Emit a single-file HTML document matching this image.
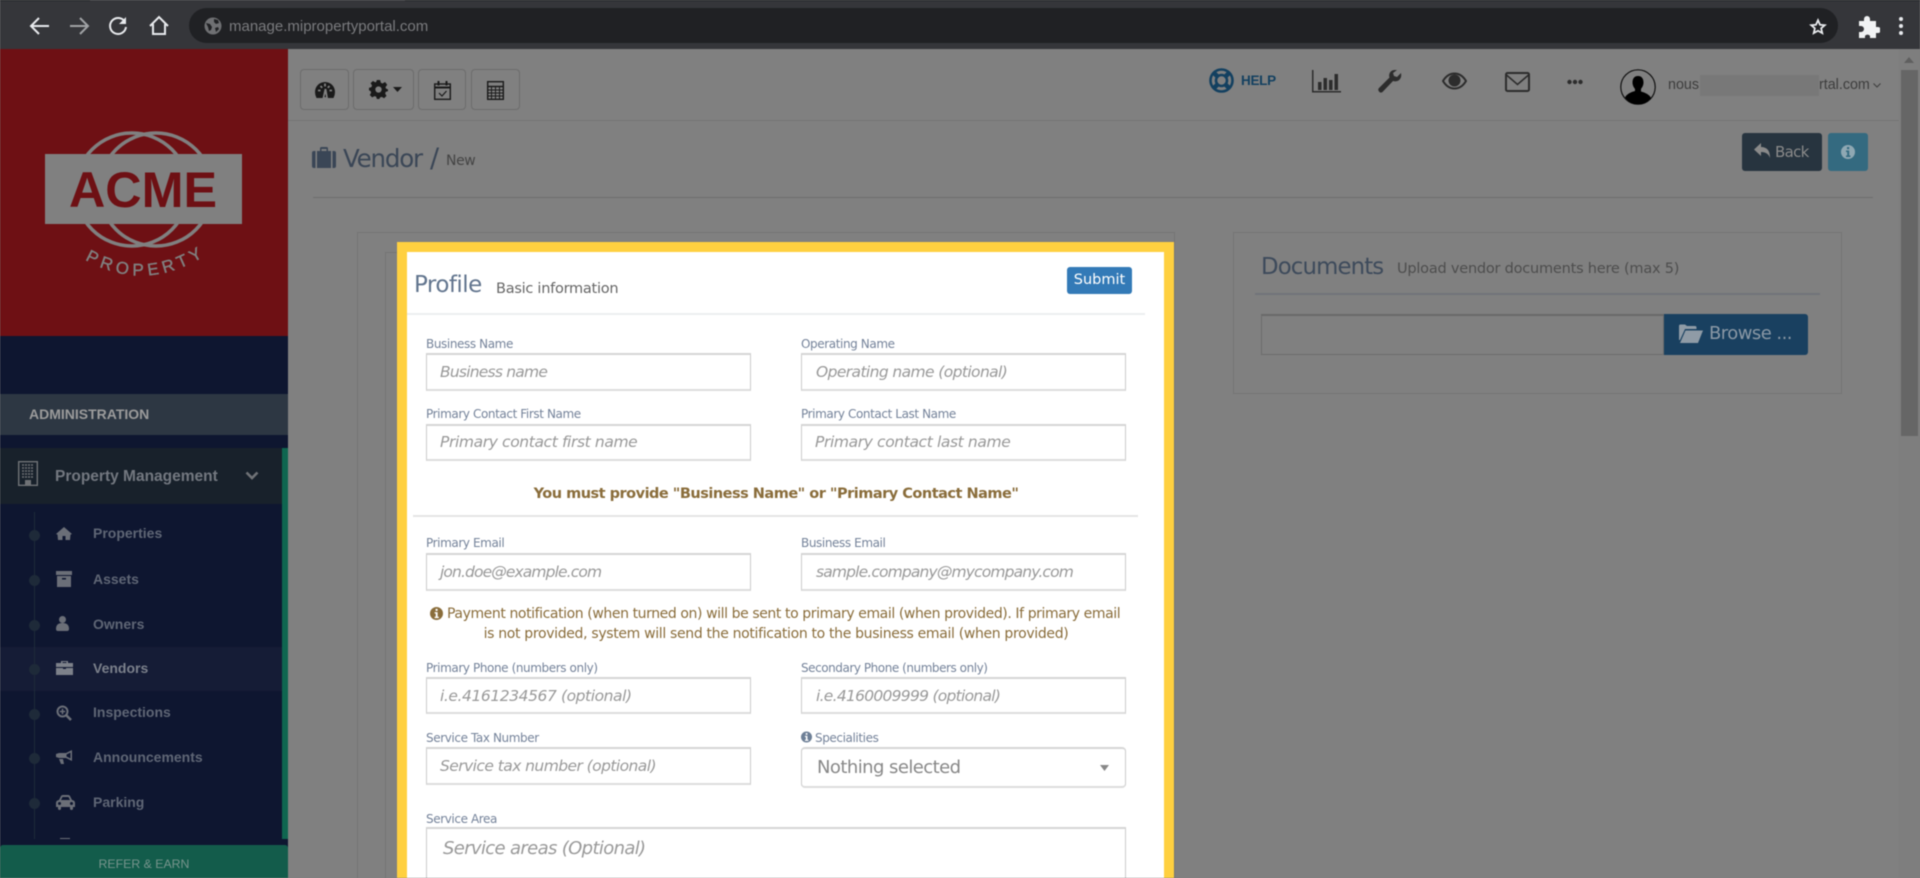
<!DOCTYPE html>
<html lang="en"><head><meta charset="utf-8"><title>Vendor</title>
<style>
*{box-sizing:border-box}
html,body{margin:0;padding:0;width:1920px;height:878px;overflow:hidden;background:#808080;font-family:"DejaVu Sans","Liberation Sans",sans-serif}
#root{position:relative;width:1920px;height:878px;overflow:hidden;filter:blur(.45px)}
.a,.t,svg.i{position:absolute}
.t{white-space:nowrap}
.ls{font-family:"Liberation Sans",sans-serif}
.nav{font-family:"Liberation Sans",sans-serif;font-weight:bold;font-size:14px;line-height:20px;left:93px;color:#5f6675}
.lb{font-size:12px;line-height:16px;color:#75839a;letter-spacing:-.4px}
.in{position:absolute;background:#fff;border:1px solid #ccc;border-top:2px solid #d6d6d6;border-bottom:2px solid #dcdcdc}
.ph{position:absolute;font-size:15.5px;line-height:20px;font-style:italic;color:#999;white-space:nowrap;letter-spacing:-.4px}
.btn{position:absolute;top:69px;height:41px;border:1px solid #6c6c6c;border-radius:4px}
.dot{position:absolute;left:29px;width:11px;height:11px;border-radius:50%;background:#1e2a39}
</style></head><body><div id="root">

<!-- browser chrome -->
<div class="a" style="left:0;top:0;width:1920px;height:49px;background:#35363a"></div>
<div class="a" style="left:0;top:0;width:90px;height:1px;background:#202124"></div>
<div class="a" style="left:405px;top:0;width:1515px;height:1px;background:#202124"></div>
<div class="a" style="left:189px;top:8px;width:1649px;height:35px;border-radius:18px;background:#202124"></div>
<svg class="i" style="left:28px;top:14px" width="24" height="24" viewBox="0 0 24 24" fill="none" stroke="#e8eaed" stroke-width="2"><path d="M21 12H4M11 4l-8 8 8 8"/></svg>
<svg class="i" style="left:67px;top:14px" width="24" height="24" viewBox="0 0 24 24" fill="none" stroke="#a0a2a5" stroke-width="2"><path d="M3 12h17M13 4l8 8-8 8"/></svg>
<svg class="i" style="left:106px;top:14px" width="24" height="24" viewBox="0 0 24 24" fill="none" stroke="#e8eaed" stroke-width="2"><path d="M19 8a8 8 0 1 0 1 5"/><path d="M20 3v7h-7" fill="#e8eaed" stroke="none"/></svg>
<svg class="i" style="left:147px;top:14px" width="24" height="24" viewBox="0 0 24 24" fill="none" stroke="#e8eaed" stroke-width="2"><path d="M3 12l9-9 9 9M6 10v10h12V10"/></svg>
<svg class="i" style="left:204px;top:17px" width="18" height="18" viewBox="0 0 18 18"><circle cx="9" cy="9" r="8.5" fill="#6f7073"/><path d="M2 6l4 1 2 3-1 3-2 1-1-4zM10 2l4 1 1 3-3 1-2-2zM11 11l3-1 1 2-3 3z" fill="#202124"/></svg>
<div class="t ls" style="left:229px;top:18px;font-size:15px;line-height:18px;color:#7a7b7e">manage.mipropertyportal.com</div>
<svg class="i" style="left:1809px;top:18px" width="18" height="18" viewBox="0 0 24 24" fill="none" stroke="#e8eaed" stroke-width="2.4"><path d="M12 3l2.7 6 6.3.6-4.8 4.2 1.5 6.4L12 17l-5.700 3.200 1.500-6.400L3 9.600 9.300 9z"/></svg>
<svg class="i" style="left:1858px;top:15px" width="22" height="23" viewBox="0 0 22 23"><path d="M1 6h5V4a3 3 0 0 1 6 0v2h6v6h2a3 3 0 0 1 0 6h-2v5H12v-2a3 3 0 0 0-5 0v2H1v-6h2a3 3 0 0 0 0-6H1z" fill="#f1f3f4"/></svg>
<div class="a" style="left:1899px;top:17px;width:4px;height:4px;border-radius:50%;background:#e8eaed"></div>
<div class="a" style="left:1899px;top:24px;width:4px;height:4px;border-radius:50%;background:#e8eaed"></div>
<div class="a" style="left:1899px;top:31px;width:4px;height:4px;border-radius:50%;background:#e8eaed"></div>

<!-- sidebar -->
<div class="a" style="left:0;top:49px;width:288px;height:287px;background:#6e1014"></div>
<svg class="i" style="left:0;top:49px" width="288" height="287" viewBox="0 49 288 287">
<circle cx="132" cy="189.500" r="56.500" fill="none" stroke="#808080" stroke-width="3.500"/>
<circle cx="156" cy="189.500" r="56.500" fill="none" stroke="#808080" stroke-width="3.500"/>
<rect x="45" y="154" width="197" height="70" fill="#808080"/>
<text x="69" y="207" font-family="Liberation Sans" font-weight="bold" font-size="50" fill="#6e1014" textLength="148" lengthAdjust="spacingAndGlyphs">ACME</text>
<path id="arc" d="M84 259 Q144 294 206 255" fill="none"/>
<text font-family="Liberation Sans" font-size="17" fill="#808080" stroke="#808080" stroke-width=".4" letter-spacing="4.500"><textPath href="#arc" startOffset="1">PROPERTY</textPath></text>
</svg>
<div class="a" style="left:0;top:336px;width:288px;height:542px;background:#0e1630"></div>
<div class="a" style="left:0;top:394px;width:288px;height:41px;background:#2d3743"></div>
<div class="t ls" style="left:29px;top:405px;font-size:14px;font-weight:bold;line-height:18px;color:#9b9b9b">ADMINISTRATION</div>
<div class="a" style="left:0;top:448px;width:282px;height:56px;background:#18212b"></div>
<div class="a" style="left:282px;top:448px;width:6px;height:391px;background:#0f6650"></div>
<svg class="i" style="left:18px;top:461px" width="20" height="25" viewBox="0 0 20 25"><rect x=".7" y=".7" width="18.600" height="23.600" fill="none" stroke="#6f7276" stroke-width="1.400"/><path d="M4 4h12M4 7h12M4 10h12M4 13h12M4 16h12" stroke="#6f7276" stroke-width="1.500" stroke-dasharray="2 1"/><rect x="7" y="19" width="6" height="5" fill="#6f7276"/></svg>
<div class="t ls" style="left:55px;top:466px;font-size:15.500px;font-weight:bold;line-height:22px;color:#737880">Property Management</div>
<svg class="i" style="left:245px;top:471px" width="14" height="10" viewBox="0 0 14 10" fill="none" stroke="#6f7276" stroke-width="2.600"><path d="M1.500 1.500L7 7l5.500-5.500"/></svg>

<div class="a" style="left:0;top:647px;width:282px;height:44px;background:#151c36"></div>
<div class="a" style="left:34px;top:512px;width:1px;height:327px;background:#1e2a39"></div>
<div class="dot" style="top:530px"></div><div class="dot" style="top:575px"></div><div class="dot" style="top:620px"></div><div class="dot" style="top:664px"></div><div class="dot" style="top:709px"></div><div class="dot" style="top:753px"></div><div class="dot" style="top:798px"></div>
<div class="t nav" style="top:523px">Properties</div>
<div class="t nav" style="top:569px">Assets</div>
<div class="t nav" style="top:614px">Owners</div>
<div class="t nav" style="top:658px;color:#7b808b">Vendors</div>
<div class="t nav" style="top:702px">Inspections</div>
<div class="t nav" style="top:747px">Announcements</div>
<div class="t nav" style="top:792px">Parking</div>
<svg class="i" style="left:56px;top:526px" width="16" height="14" viewBox="0 0 16 14"><path d="M8 1l8 7-1.500.6-.5 5.400H9.500v-4h-3v4H2l-.5-5.400L0 8z" fill="#6b6f78"/></svg>
<svg class="i" style="left:56px;top:571px" width="16" height="16" viewBox="0 0 16 16"><path d="M0 0h16v4H0zM1 5h14v11H1z" fill="#6b6f78"/><rect x="6" y="7" width="4" height="1.500" fill="#0e1630"/></svg>
<svg class="i" style="left:56px;top:616px" width="13" height="15" viewBox="0 0 13 15"><circle cx="6.500" cy="3.500" r="3.500" fill="#6b6f78"/><path d="M0 13c0-4 2-6 6.500-6S13 9 13 13q0 2-2 2H2q-2 0-2-2z" fill="#6b6f78"/></svg>
<svg class="i" style="left:56px;top:660px" width="17" height="15" viewBox="0 0 17 15"><path d="M5 3V1h7v2h5v4H0V3zM6.500 2v1h4V2zM0 8h7v1h3V8h7v7H0z" fill="#7d818a"/></svg>
<svg class="i" style="left:56px;top:705px" width="16" height="16" viewBox="0 0 16 16" fill="none" stroke="#6b6f78"><circle cx="6.500" cy="6.500" r="5" stroke-width="2"/><path d="M10 10l5 5" stroke-width="2.600"/><path d="M3.800 6.500h5.400M6.500 3.800v5.400" stroke-width="1.500"/></svg>
<svg class="i" style="left:56px;top:750px" width="17" height="15" viewBox="0 0 17 15"><path d="M16 0v11l-6-3H3L0 7V4l3-1h7zM14.500 2.500L10.500 4.500v2l4 2zM3 9h4l1 5H5z" fill="#6b6f78"/></svg>
<svg class="i" style="left:56px;top:795px" width="19" height="15" viewBox="0 0 19 15"><path d="M3 5l2-4q.5-1 2-1h5q1.500 0 2 1l2 4q3 .5 3 3v4h-2v1.500q0 1.500-1.500 1.500T14 13.500V12H5v1.500Q5 15 3.500 15T2 13.500V12H0V8q0-2.500 3-3zM5 5h9l-1.500-3h-6zM3.500 7a1.500 1.500 0 1 0 0 3 1.500 1.500 0 0 0 0-3zM15.500 7a1.500 1.500 0 1 0 0 3 1.500 1.500 0 0 0 0-3z" fill="#6b6f78" fill-rule="evenodd"/></svg>
<div class="a" style="left:60px;top:838px;width:10px;height:1px;background:#6b6f78"></div>
<div class="a" style="left:0;top:845px;width:288px;height:33px;background:#135c4b;border-radius:3px 3px 0 0"></div>
<div class="t ls" style="left:0;width:288px;text-align:center;top:855px;font-size:12.300px;line-height:18px;color:#76948c">REFER &amp; EARN</div>

<!-- scrollbar -->
<div class="a" style="left:1899px;top:49px;width:21px;height:829px;background:#7e7e7e"></div>
<div class="a" style="left:1901px;top:70px;width:17px;height:366px;background:#666"></div>
<svg class="i" style="left:1904px;top:56px" width="10" height="8" viewBox="0 0 10 8"><path d="M0 7l5-6 5 6z" fill="#5f5f5f"/></svg>

<!-- top toolbar -->
<div class="a" style="left:288px;top:120px;width:1611px;height:1px;background:#747474"></div>
<div class="btn" style="left:300px;width:49px"></div>
<div class="btn" style="left:353px;width:61px"></div>
<div class="btn" style="left:418px;width:48px"></div>
<div class="btn" style="left:471px;width:49px"></div>
<svg class="i" style="left:315px;top:82px" width="20" height="16" viewBox="0 0 20 16"><path d="M10 0a10 10 0 0 1 10 10q0 3-1.500 6h-17Q0 13 0 10A10 10 0 0 1 10 0z" fill="#1a1a1a"/><path d="M8.500 16l2-9 1.500 9zM3 8.500h2.500M14.500 8.500H17M5.500 4l1.700 1.700M14.500 4l-1.700 1.700M10 1.500v3" stroke="#808080" stroke-width="1.800"/></svg>
<svg class="i" style="left:369px;top:80px" width="19" height="19" viewBox="0 0 24 24"><path d="M10 0h4l1 3.500 2 .9L20.300 2.600 23 6l-2.200 3 .6 1.800L24 12v2l-2.900 1-.7 2 1.700 3-3 3-3-1.700-2 .7L13 24h-3l-1-3-2-.7L4 22l-3-3 1.700-3-.7-2L0 13v-3l3-1 .8-2L2 4l3-2.700 3 1.700 1-.5zM12 8a4 4 0 1 0 0 8 4 4 0 0 0 0-8z" fill="#1a1a1a" fill-rule="evenodd"/></svg>
<svg class="i" style="left:393px;top:87px" width="9" height="5" viewBox="0 0 9 5"><path d="M0 0h9L4.500 5z" fill="#1a1a1a"/></svg>
<svg class="i" style="left:434px;top:81px" width="17" height="19" viewBox="0 0 17 19" fill="none" stroke="#1a1a1a"><rect x=".7" y="3" width="15.600" height="15.300" stroke-width="1.400"/><path d="M1 6.500h15" stroke-width="2"/><path d="M4.500 0v4.500M12.500 0v4.500" stroke-width="2"/><path d="M5 12l3 3 4.500-5" stroke-width="1.200"/></svg>
<svg class="i" style="left:487px;top:81px" width="17" height="19" viewBox="0 0 17 19" fill="none" stroke="#1a1a1a"><rect x=".7" y=".7" width="15.600" height="17.600" stroke-width="1.400"/><path d="M1 5.500h15" stroke-width="1.500"/><path d="M1 9h15M1 12h15M1 15h15M4.500 6v12M8.500 6v12M12.500 6v12" stroke-width="1"/></svg>

<!-- lifebuoy + right icons -->
<svg class="i" style="left:1209px;top:68px" width="25" height="25" viewBox="0 0 25 25" fill="none" stroke="#134060"><circle cx="12.500" cy="12.500" r="11" stroke-width="2.600"/><circle cx="12.500" cy="12.500" r="5.500" stroke-width="2.600"/><path d="M4.500 4.500l4.500 4.500M20.500 4.500L16 9M4.500 20.500L9 16M20.500 20.500L16 16" stroke-width="4.500"/></svg>
<div class="t ls" style="left:1241px;top:72px;font-size:13.500px;font-weight:bold;line-height:18px;color:#134060;letter-spacing:-.3px">HELP</div>
<svg class="i" style="left:1312px;top:70px" width="29" height="23" viewBox="0 0 29 23" fill="#2c2c2c"><path d="M0 0h1.500v21H29v1.500H0z"/><path d="M6 12h3.500v8H6zM11.500 8h3.500v12h-3.500zM17 10h3.500v10H17zM22.500 4H26v16h-3.500z"/></svg>
<svg class="i" style="left:1378px;top:70px" width="24" height="23" viewBox="0 0 24 23"><path d="M23 3l-4 4-3-1-1-3 4-3q-5-.5-7 2.500-1.500 2.500-.5 5L1 18q-1.500 1.500 0 3.500t3.500.5L15 11q3 1 5.500-.5Q24 8 23 3z" fill="#2c2c2c"/></svg>
<svg class="i" style="left:1442px;top:72px" width="25" height="18" viewBox="0 0 25 18" fill="none" stroke="#2c2c2c"><path d="M1 9q4.500-7.500 11.500-7.500T24 9q-4.500 7.500-11.500 7.500T1 9z" stroke-width="2"/><circle cx="12.500" cy="8.500" r="6" fill="#2c2c2c" stroke="none"/></svg>
<svg class="i" style="left:1505px;top:72px" width="25" height="20" viewBox="0 0 25 20" fill="none" stroke="#2c2c2c"><rect x="1" y="1" width="23" height="18" rx="1.500" stroke-width="2"/><path d="M1.500 3l11 9.500 11-9.500" stroke-width="1.600"/></svg>
<svg class="i" style="left:1567px;top:79px" width="16" height="6" viewBox="0 0 16 6" fill="#2c2c2c"><circle cx="2.500" cy="3" r="2.200"/><circle cx="8" cy="3" r="2.200"/><circle cx="13.500" cy="3" r="2.200"/></svg>
<svg class="i" style="left:1620px;top:69px" width="36" height="36" viewBox="0 0 36 36"><circle cx="18" cy="18" r="17.200" fill="#808080" stroke="#111" stroke-width="1.200"/><path d="M18 7c4 0 5.500 3 5.500 6.500 0 3-1.500 5-2.500 6.500v2.500q8 2 10 6.500Q26 35.500 18 35.500T5 28.500q2-4.500 10-6.500V20c-1-1.500-2.500-3.500-2.500-6.500C12.500 10 14 7 18 7z" fill="#000"/></svg>
<div class="t ls" style="left:1668px;top:75px;width:32px;overflow:hidden;font-size:14.300px;line-height:20px;color:#3d3d3d">nousha</div>
<div class="a" style="left:1700px;top:75px;width:119px;height:21px;background:#787878"></div>
<div class="t ls" style="left:1819px;top:75px;font-size:14.300px;line-height:20px;color:#3d3d3d">rtal.com</div>
<svg class="i" style="left:1873px;top:83px" width="8" height="5" viewBox="0 0 8 5" fill="none" stroke="#3d3d3d"><path d="M.5.500L4 4 7.500.500"/></svg>

<!-- page header -->
<svg class="i" style="left:312px;top:147px" width="24" height="21" viewBox="0 0 24 21" fill="#3a4656"><path d="M8 4V1.500Q8 0 9.500 0h5Q16 0 16 1.500V4h-1.500V2h-5v2zM0 6q0-2 2-2h1.500v17H2q-2 0-2-2zM5 4h14v17H5zM20.500 4H22q2 0 2 2v13q0 2-2 2h-1.500z"/></svg>
<div class="t" style="left:343px;top:144px;font-size:24.500px;line-height:30px;color:#3a4656;letter-spacing:-1.200px">Vendor</div>
<div class="t" style="left:430px;top:144px;font-size:27px;line-height:30px;color:#3a4656">/</div>
<div class="t" style="left:446px;top:152px;font-size:14px;line-height:18px;color:#444;letter-spacing:-.4px">New</div>
<div class="a" style="left:313px;top:197px;width:1560px;height:1px;background:#6e6e6e"></div>
<div class="a" style="left:1742px;top:133px;width:80px;height:38px;background:#27343f;border-radius:3px"></div>
<svg class="i" style="left:1754px;top:143px" width="16" height="15" viewBox="0 0 16 15"><path d="M7 0v4q9 0 9 11-2-6-9-6v4L0 6.500z" fill="#8a8a8a"/></svg>
<div class="t" style="left:1775px;top:142px;font-size:15px;line-height:20px;color:#8a8a8a;letter-spacing:-.7px">Back</div>
<div class="a" style="left:1828px;top:133px;width:40px;height:38px;background:#346a80;border-radius:3px"></div>
<svg class="i" style="left:1841px;top:145px" width="14" height="14" viewBox="0 0 14 14"><circle cx="7" cy="7" r="7" fill="#8fa8b3"/><rect x="6" y="2" width="2.200" height="2.200" fill="#346a80"/><path d="M5 5.500h3.200V10.500H9.500V12h-4.500v-1.500h1.200V7H5z" fill="#346a80"/></svg>

<!-- dimmed panels behind -->
<div class="a" style="left:357px;top:232px;width:818px;height:700px;border:1px solid #757575"></div>
<div class="a" style="left:385px;top:252px;width:700px;height:700px;border:1px solid #757575"></div>

<!-- documents -->
<div class="a" style="left:1233px;top:232px;width:609px;height:162px;border:1px solid #757575"></div>
<div class="t" style="left:1261px;top:252px;font-size:22.800px;line-height:30px;color:#3d4a5b;letter-spacing:-.85px">Documents</div>
<div class="t" style="left:1397px;top:259px;font-size:14.500px;line-height:20px;color:#4d4d4d;letter-spacing:-.22px">Upload vendor documents here (max 5)</div>
<div class="a" style="left:1255px;top:293px;width:565px;height:2px;background:#717479"></div>
<div class="a" style="left:1261px;top:314px;width:403px;height:41px;border:1px solid #6c6c6c;border-top:2px solid #696969"></div>
<div class="a" style="left:1664px;top:314px;width:144px;height:41px;background:#194060;border-radius:0 3px 3px 0"></div>
<svg class="i" style="left:1679px;top:323px" width="24" height="20" viewBox="0 0 24 20"><path d="M0 17V3q0-1.500 1.500-1.500H6L8 3h8q1.500 0 1.500 1.500V6H6L1 17zM6.500 7.500H24l-5 12.500H1z" fill="#8f9ba6"/></svg>
<div class="t" style="left:1709px;top:322px;font-size:18px;line-height:24px;color:#8a98a5;letter-spacing:-.55px">Browse ...</div>

<!-- yellow highlight -->
<div class="a" style="left:397px;top:242px;width:777px;height:640px;background:#ffd040"></div>
<div class="a" style="left:407px;top:252px;width:757px;height:630px;background:#fff"></div>

<div class="t" style="left:414px;top:270px;font-size:23px;line-height:30px;color:#62758e;letter-spacing:-.55px">Profile</div>
<div class="t" style="left:496px;top:279px;font-size:14.500px;line-height:20px;color:#666;letter-spacing:-.26px">Basic information</div>
<div class="a" style="left:1067px;top:267px;width:65px;height:27px;background:#337ab7;border-radius:3px"></div>
<div class="t" style="left:1067px;width:65px;text-align:center;top:270px;font-size:14.500px;line-height:20px;color:#fff">Submit</div>
<div class="a" style="left:407px;top:313px;width:738px;height:2px;background:#eceef0"></div>

<div class="t lb" style="left:426px;top:336px">Business Name</div>
<div class="t lb" style="left:801px;top:336px">Operating Name</div>
<div class="in" style="left:426px;top:353px;width:325px;height:38px"></div>
<div class="in" style="left:801px;top:353px;width:325px;height:38px"></div>
<div class="ph" style="left:440px;top:362px;letter-spacing:-.78px">Business name</div>
<div class="ph" style="left:816px;top:362px;letter-spacing:-.6px">Operating name (optional)</div>

<div class="t lb" style="left:426px;top:406px">Primary Contact First Name</div>
<div class="t lb" style="left:801px;top:406px">Primary Contact Last Name</div>
<div class="in" style="left:426px;top:424px;width:325px;height:37px"></div>
<div class="in" style="left:801px;top:424px;width:325px;height:37px"></div>
<div class="ph" style="left:440px;top:432px;letter-spacing:-.38px">Primary contact first name</div>
<div class="ph" style="left:815px;top:432px;letter-spacing:-.38px">Primary contact last name</div>

<div class="t" style="left:407px;width:738px;text-align:center;top:484px;font-size:14.500px;font-weight:bold;line-height:20px;color:#8a6d3b;letter-spacing:-.5px">You must provide "Business Name" or "Primary Contact Name"</div>
<div class="a" style="left:413px;top:515px;width:725px;height:2px;background:#e4e4e4"></div>

<div class="t lb" style="left:426px;top:535px">Primary Email</div>
<div class="t lb" style="left:801px;top:535px">Business Email</div>
<div class="in" style="left:426px;top:553px;width:325px;height:38px"></div>
<div class="in" style="left:801px;top:553px;width:325px;height:38px"></div>
<div class="ph" style="left:440px;top:562px;letter-spacing:-.88px">jon.doe@example.com</div>
<div class="ph" style="left:816px;top:562px;letter-spacing:-.85px">sample.company@mycompany.com</div>

<svg class="i" style="left:430px;top:607px" width="13" height="13" viewBox="0 0 14 14"><circle cx="7" cy="7" r="7" fill="#8a6d3b"/><rect x="6" y="2" width="2.200" height="2.200" fill="#fff"/><path d="M5 5.500h3.200V10.500H9.500V12h-4.500v-1.500h1.200V7H5z" fill="#fff"/></svg>
<div class="t" style="left:447px;top:604px;font-size:14px;line-height:20px;color:#8a6d3b;letter-spacing:-.41px">Payment notification (when turned on) will be sent to primary email (when provided). If primary email</div>
<div class="t" style="left:407px;width:738px;text-align:center;top:624px;font-size:14px;line-height:20px;color:#8a6d3b;letter-spacing:-.33px">is not provided, system will send the notification to the business email (when provided)</div>

<div class="t lb" style="left:426px;top:660px">Primary Phone (numbers only)</div>
<div class="t lb" style="left:801px;top:660px;letter-spacing:-.45px">Secondary Phone (numbers only)</div>
<div class="in" style="left:426px;top:677px;width:325px;height:37px"></div>
<div class="in" style="left:801px;top:677px;width:325px;height:37px"></div>
<div class="ph" style="left:440px;top:686px;letter-spacing:-.42px">i.e.4161234567 (optional)</div>
<div class="ph" style="left:816px;top:686px;letter-spacing:-.72px">i.e.4160009999 (optional)</div>

<div class="t lb" style="left:426px;top:730px">Service Tax Number</div>
<svg class="i" style="left:801px;top:731px" width="11" height="12" viewBox="0 0 14 14"><circle cx="7" cy="7" r="7" fill="#6d7f96"/><rect x="6" y="2" width="2.200" height="2.200" fill="#fff"/><path d="M5 5.500h3.200V10.500H9.500V12h-4.500v-1.500h1.200V7H5z" fill="#fff"/></svg>
<div class="t lb" style="left:815px;top:730px">Specialities</div>
<div class="in" style="left:426px;top:747px;width:325px;height:38px"></div>
<div class="ph" style="left:440px;top:756px;letter-spacing:-.56px">Service tax number (optional)</div>
<div class="in" style="left:801px;top:747px;width:325px;height:41px;border-radius:4px"></div>
<div class="t" style="left:817px;top:756px;font-size:18px;line-height:24px;color:#888;letter-spacing:-.56px">Nothing selected</div>
<svg class="i" style="left:1100px;top:765px" width="9" height="6" viewBox="0 0 9 6"><path d="M0 0h9L4.500 6z" fill="#888"/></svg>

<div class="t lb" style="left:426px;top:811px">Service Area</div>
<div class="a" style="left:426px;top:827px;width:700px;height:51px;overflow:hidden"><div class="in" style="left:0;top:0;width:700px;height:70px"></div></div>
<div class="ph" style="left:443px;top:837px;font-size:18px;line-height:24px;letter-spacing:-.65px">Service areas (Optional)</div>

</div></body></html>
